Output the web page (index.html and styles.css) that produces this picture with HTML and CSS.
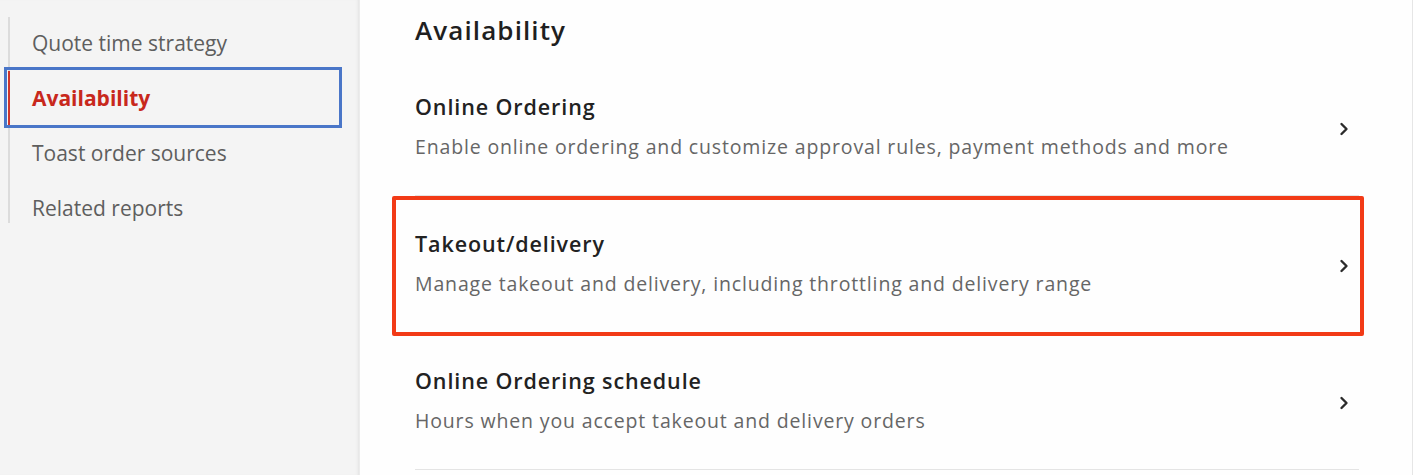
FILE: index.html
```html
<!DOCTYPE html>
<html lang="en">
<head>
<meta charset="utf-8">
<title>Availability</title>
<link rel="stylesheet" href="styles.css">
</head>
<body>
<aside class="sidebar">
  <ul class="nav">
    <li class="nav-item">Quote time strategy</li>
    <li class="nav-item active">Availability</li>
    <li class="nav-item">Toast order sources</li>
    <li class="nav-item">Related reports</li>
  </ul>
</aside>
<main class="main">
  <h1 class="title">Availability</h1>
  <div class="rows">
    <div class="row">
      <div class="row-text">
        <div class="row-title">Online Ordering</div>
        <div class="row-desc">Enable online ordering and customize approval rules, payment methods and more</div>
      </div>
      <svg class="chev" width="10" height="14" viewBox="0 0 10 14"><path d="M2.5 2 L7.5 7 L2.5 12" fill="none" stroke="#2b2b2b" stroke-width="2.4" stroke-linecap="round" stroke-linejoin="round"/></svg>
    </div>
    <div class="row highlighted">
      <div class="row-text">
        <div class="row-title">Takeout/delivery</div>
        <div class="row-desc">Manage takeout and delivery, including throttling and delivery range</div>
      </div>
      <svg class="chev" width="10" height="14" viewBox="0 0 10 14"><path d="M2.5 2 L7.5 7 L2.5 12" fill="none" stroke="#2b2b2b" stroke-width="2.4" stroke-linecap="round" stroke-linejoin="round"/></svg>
    </div>
    <div class="row">
      <div class="row-text">
        <div class="row-title">Online Ordering schedule</div>
        <div class="row-desc">Hours when you accept takeout and delivery orders</div>
      </div>
      <svg class="chev" width="10" height="14" viewBox="0 0 10 14"><path d="M2.5 2 L7.5 7 L2.5 12" fill="none" stroke="#2b2b2b" stroke-width="2.4" stroke-linecap="round" stroke-linejoin="round"/></svg>
    </div>
  </div>
</main>
</body>
</html>
```
FILE: styles.css
```css
html, body {
  margin: 0;
  padding: 0;
  height: 475px;
  overflow: hidden;
}
body {
  display: flex;
  background: #fefefe;
  font-family: "Open Sans", "Liberation Sans", sans-serif;
}
.sidebar {
  width: 360px;
  flex: none;
  background: #f4f4f4;
  box-shadow: inset -3px 0 3px -2px #e2e2e2;
  border-right: 1px solid #ececec;
  padding-top: 15.5px;
  box-sizing: border-box;
}
.nav {
  list-style: none;
  margin: 0 0 0 8px;
  padding: 0;
  position: relative;
}
.nav::before {
  content: "";
  position: absolute;
  left: 0;
  top: 1.5px;
  bottom: 12.5px;
  width: 2px;
  background: #dcdcdc;
}
.nav-item {
  height: 55px;
  display: flex;
  align-items: center;
  padding-left: 24px;
  font-size: 21px;
  color: #5e5e5e;
  position: relative;
}
.nav-item.active {
  color: #c8281c;
  font-weight: 700;
}
.nav-item.active::before {
  content: "";
  position: absolute;
  left: 0;
  top: 0;
  bottom: 0;
  width: 2px;
  background: #d0342a;
}
.nav-item.active::after {
  content: "";
  position: absolute;
  left: -4px;
  top: -3.5px;
  width: 338px;
  height: 61px;
  box-sizing: border-box;
  border: 3px solid #4a76c8;
}
.main {
  flex: 1;
  padding: 0 53px 0 55px;
  border-right: 1px solid #e6e6e6;
}
.title {
  margin: 0;
  height: 58.5px;
  display: flex;
  align-items: center;
  font-size: 26px;
  font-weight: 600;
  letter-spacing: 1.1px;
  color: #1f1f1f;
  line-height: 1;
  box-sizing: border-box;
  padding-top: 2px;
}
.row {
  height: 137px;
  box-sizing: border-box;
  border-bottom: 1px solid #e4e4e4;
  display: flex;
  align-items: center;
  justify-content: space-between;
  position: relative;
}
.row-text {
  display: flex;
  flex-direction: column;
  gap: 12px;
}
.row-title {
  font-size: 21.5px;
  font-weight: 600;
  letter-spacing: 0.9px;
  color: #222;
  line-height: 28px;
}
.row-desc {
  font-size: 19.5px;
  letter-spacing: 0.85px;
  color: #666;
  line-height: 28px;
}
.chev {
  margin-right: 10px;
  margin-top: 4px;
}
.highlighted::after {
  content: "";
  position: absolute;
  left: -23px;
  right: -5px;
  top: 0.5px;
  bottom: -4.5px;
  border: 4px solid #f23a16;
  border-radius: 2px;
}
```
